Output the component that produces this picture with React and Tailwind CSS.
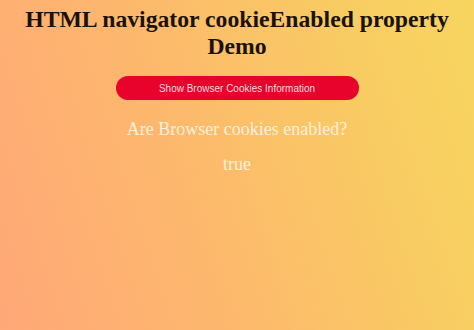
import React from "react";

const App = () => {
  return (
    <div className="w-[474px] h-[330px] overflow-hidden bg-[linear-gradient(72deg,#ffa878_0%,#fdb86d_40%,#f9cb63_75%,#f7d55f_100%)] flex flex-col items-center text-center font-['Liberation_Serif',serif]">
      <h1 className="mt-[6px] w-full text-[23.7px] leading-[27px] font-bold text-[#1a1208]">
        HTML navigator cookieEnabled property Demo
      </h1>
      <button
        type="button"
        className="mt-[16px] w-[243px] h-[24px] rounded-full bg-[#e8032d] text-[#f3dede] text-[10px] font-['Liberation_Sans',sans-serif]"
      >
        Show Browser Cookies Information
      </button>
      <p className="mt-[18px] text-[18px] leading-[22px] text-[#fdf0dc]">Are Browser cookies enabled?</p>
      <p className="mt-[13px] text-[18px] leading-[22px] text-[#fdf0dc]">true</p>
    </div>
  );
};

export default App;
